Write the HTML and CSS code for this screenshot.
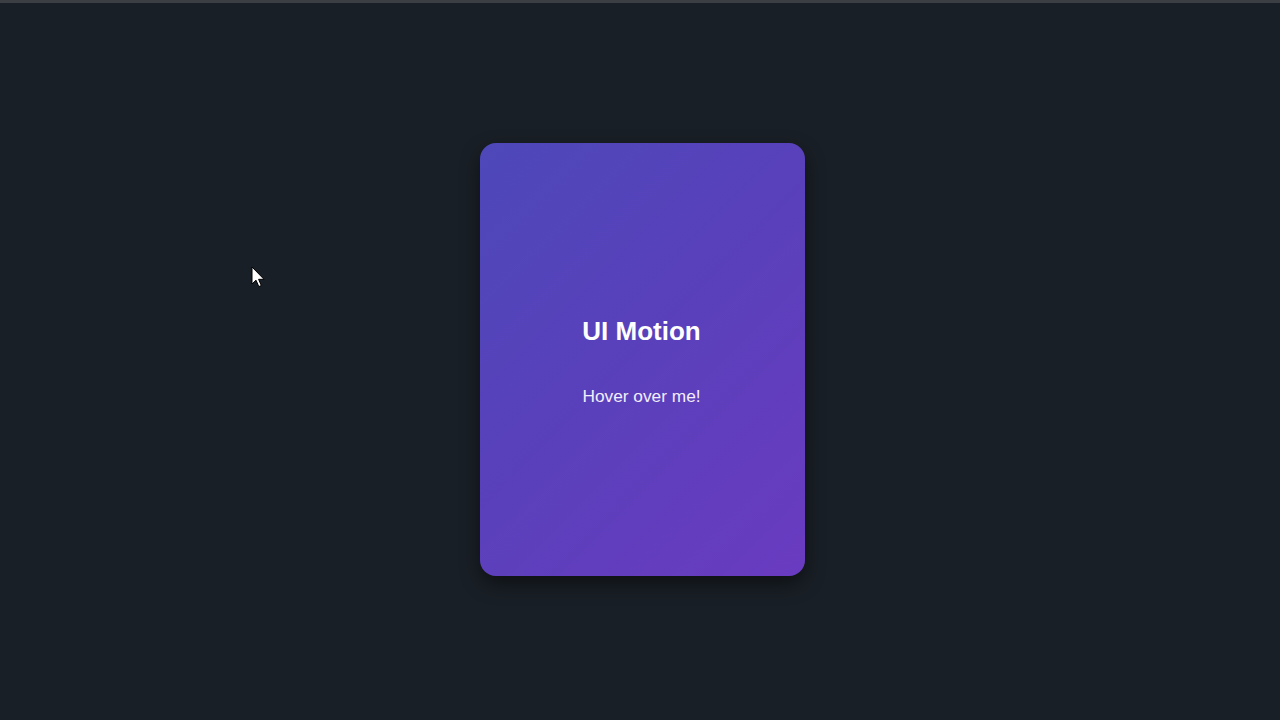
FILE: index.html
```html
<!DOCTYPE html>
<html lang="en">
<head>
<meta charset="utf-8">
<title>UI Motion</title>
<link rel="stylesheet" href="styles.css">
</head>
<body>
<div class="topbar"></div>
<main class="stage">
  <div class="card">
    <h2 class="card-title">UI Motion</h2>
    <p class="card-text">Hover over me!</p>
  </div>
</main>
<svg class="cursor" width="15" height="23" viewBox="0 0 15 23" xmlns="http://www.w3.org/2000/svg">
  <path d="M1 1 L1 18 L5 14.2 L7.8 20.6 L10.3 19.5 L7.6 13.3 L13 13.3 Z" fill="#ffffff" stroke="#000000" stroke-width="1" stroke-linejoin="round"/>
</svg>
</body>
</html>
```
FILE: styles.css
```css
html, body {
  margin: 0;
  padding: 0;
  height: 100%;
}
body {
  background: #191f26;
  font-family: "Liberation Sans", Arial, sans-serif;
  display: flex;
  flex-direction: column;
  overflow: hidden;
}
.topbar {
  height: 3px;
  background: #3b3e42;
  flex: none;
}
.stage {
  flex: 1;
  display: flex;
  align-items: center;
  justify-content: center;
  padding: 0 0 4px 5px;
}
.card {
  width: 325px;
  height: 433px;
  border-radius: 16px;
  background: linear-gradient(135deg, #4d48b9 0%, #5a40bb 50%, #6a3bc0 100%);
  box-shadow: 0 8px 20px rgba(0, 0, 0, 0.45);
  display: flex;
  flex-direction: column;
  align-items: center;
  justify-content: center;
  color: #ffffff;
  box-sizing: border-box;
  padding: 3px 2px 0 0;
}
.card-title {
  margin: 0;
  font-size: 26px;
  font-weight: 700;
  line-height: 30px;
}
.card-text {
  margin: 40px 0 0;
  font-size: 17.3px;
  line-height: 20px;
  color: #f2eefc;
}
.cursor {
  position: absolute;
  left: 251px;
  top: 266px;
}
```
